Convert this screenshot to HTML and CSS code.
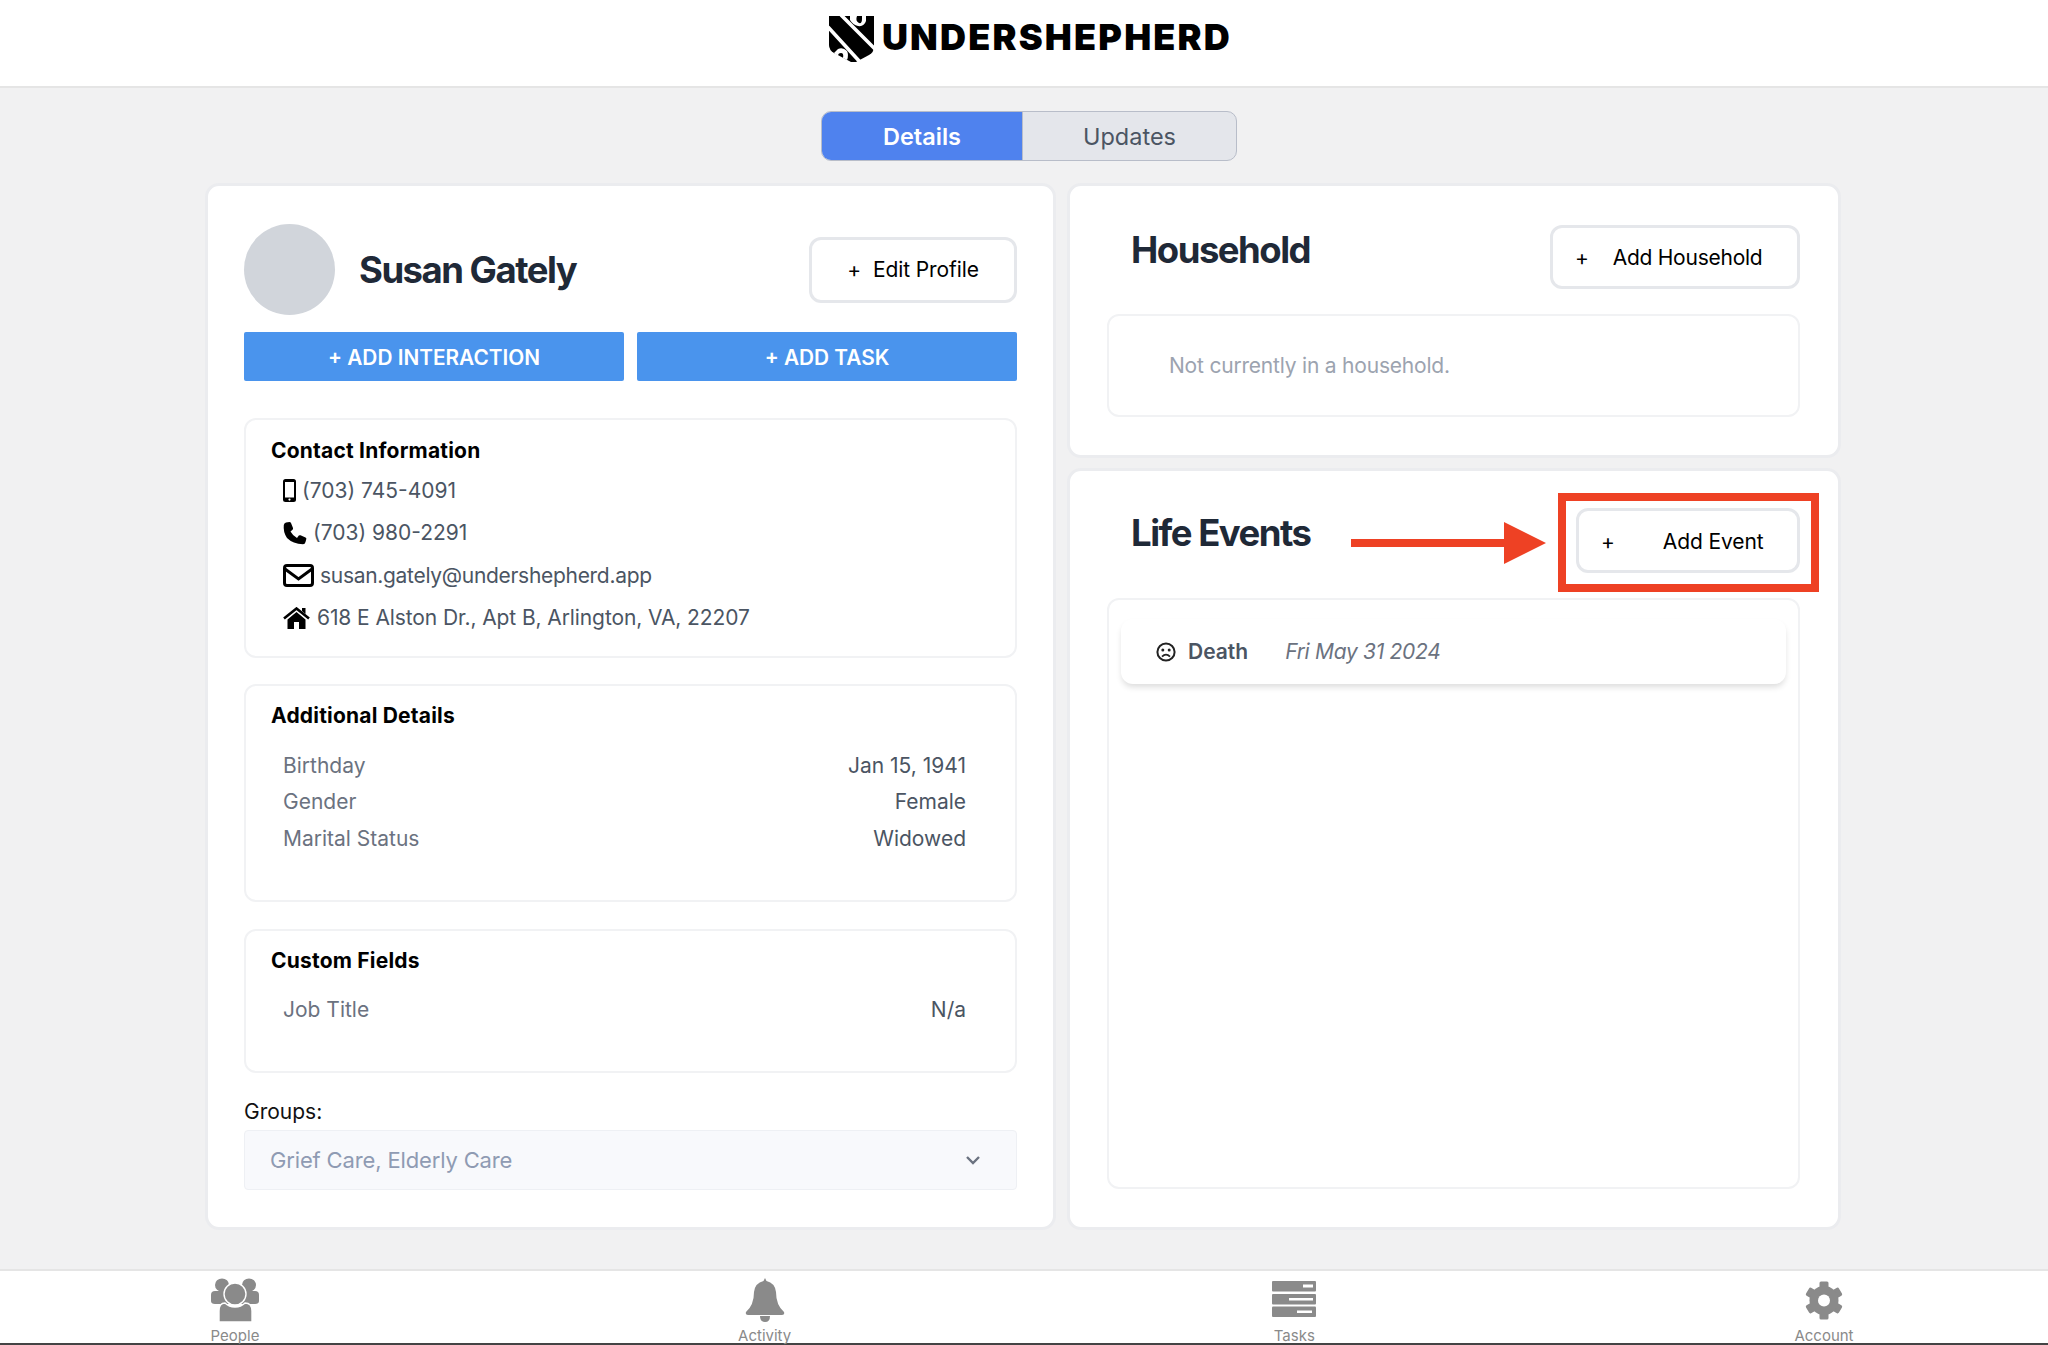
FILE: index.html
```html
<!DOCTYPE html>
<html lang="en">

<head>
  <meta charset="UTF-8" />
  <meta name="viewport" content="width=device-width, initial-scale=1.0" />
  <title>Undershepherd</title>
  <link rel="stylesheet" href="styles.css">
</head>

<body>
  <header class="topbar">
    <div class="logo">
      <svg class="logo-mark" viewBox="0 0 45 46">
        <path d="M0 0H45V31Q45 36 40 39L27 46H22L5 37Q0 34 0 29Z" fill="#000" />
        <path d="M12 -1L46 33M-1 11L31 46" stroke="#fff" stroke-width="3.6" fill="none" />
        <path d="M21 0H28Q26 5 30 7Q33 8 33 3V0H37V5Q35 11 29 10Q24 9 21 4Z" fill="#fff" />
        <path d="M9 33Q14 31 18 35Q20 39 18 44L14 42Q15 37 12 37Q9 37 9 40L5 37Z" fill="#fff" />
      </svg>
      <span class="logo-text">UNDERSHEPHERD</span>
    </div>
  </header>

  <main class="content">
    <div class="tabs">
      <div class="tab tab-active">Details</div>
      <div class="tab">Updates</div>
    </div>

    <div class="columns">
      <section class="card profile">
        <div class="profile-head">
          <div class="avatar"></div>
          <h1 class="name">Susan Gately</h1>
          <button class="btn btn-edit"><span>+</span><span>Edit Profile</span></button>
        </div>

        <div class="actions">
          <button class="action">+ ADD INTERACTION</button>
          <button class="action">+ ADD TASK</button>
        </div>

        <div class="subcard contact">
          <h3 class="subtitle">Contact Information</h3>
          <div class="contact-row">
            <svg class="icon-mobile" viewBox="0 0 13 23">
              <rect x="0" y="0" width="13" height="23" rx="2.5" fill="#000" />
              <rect x="2" y="3" width="9" height="15.5" fill="#fff" />
              <circle cx="6.5" cy="20.6" r="1.1" fill="#fff" />
            </svg>
            <span>(703) 745-4091</span>
          </div>
          <div class="contact-row">
            <svg class="icon-phone" viewBox="0 0 24 24">
              <path d="M3 1.5L6.5 1Q7.5 1 8 2L10 7Q10.3 8 9.5 8.7L7.5 10.5Q10 15 14 17L15.8 14.6Q16.5 14 17.5 14.3L22.5 16.5Q23.7 17 23.3 18L22.5 21Q22 23.3 20 23.3Q10 23 4 17Q0 11 .8 4Q1 2 3 1.5Z" fill="#000" />
            </svg>
            <span>(703) 980-2291</span>
          </div>
          <div class="contact-row email">
            <svg class="icon-mail" viewBox="0 0 31 23">
              <rect x="1.5" y="1.5" width="28" height="20" rx="2.5" fill="none" stroke="#000" stroke-width="3" />
              <path d="M2 5L15.5 15L29 5" fill="none" stroke="#000" stroke-width="3" />
            </svg>
            <span>susan.gately@undershepherd.app</span>
          </div>
          <div class="contact-row address">
            <svg class="icon-home" viewBox="0 0 27 22">
              <path d="M1 11.5L13.5 1.5L26 11.5" fill="none" stroke="#000" stroke-width="2.6" />
              <path d="M19 1H22.5V7L19 4Z" fill="#000" />
              <path d="M4.5 12.5L13.5 5L22.5 12.5V22H16V15H11V22H4.5Z" fill="#000" />
            </svg>
            <span>618 E Alston Dr., Apt B, Arlington, VA, 22207</span>
          </div>
        </div>

        <div class="subcard details">
          <h3 class="subtitle">Additional Details</h3>
          <div class="detail-rows">
            <div class="detail-row"><span>Birthday</span><span class="detail-value">Jan 15, 1941</span></div>
            <div class="detail-row"><span>Gender</span><span class="detail-value">Female</span></div>
            <div class="detail-row"><span>Marital Status</span><span class="detail-value">Widowed</span></div>
          </div>
        </div>

        <div class="subcard custom">
          <h3 class="subtitle">Custom Fields</h3>
          <div class="detail-rows">
            <div class="detail-row"><span>Job Title</span><span class="detail-value">N/a</span></div>
          </div>
        </div>

        <div class="groups-label">Groups:</div>
        <div class="select">
          <span>Grief Care, Elderly Care</span>
          <svg class="chevron" viewBox="0 0 16 10">
            <path d="M2 2L8 8L14 2" fill="none" stroke="#6b7280" stroke-width="2.4" />
          </svg>
        </div>
      </section>

      <div class="side">
        <section class="card household">
          <div class="side-head">
            <h2 class="side-title">Household</h2>
            <button class="btn btn-household"><span>+</span><span>Add Household</span></button>
          </div>
          <div class="subcard empty">Not currently in a household.</div>
        </section>

        <section class="card events">
          <div class="side-head">
            <h2 class="side-title">Life Events</h2>
            <button class="btn btn-event"><span>+</span><span>Add Event</span></button>
            <svg class="callout-arrow" viewBox="0 0 195 42">
              <path d="M0 17H153V0L195 21L153 42V25H0Z" fill="#ee4124" />
            </svg>
            <div class="callout-box"></div>
          </div>
          <div class="subcard event-list">
            <div class="event">
              <svg class="icon-frown" viewBox="0 0 20 20">
                <circle cx="10" cy="10" r="8.6" fill="none" stroke="#222" stroke-width="2" />
                <circle cx="6.8" cy="8" r="1.5" fill="#222" />
                <circle cx="13.2" cy="8" r="1.5" fill="#222" />
                <path d="M6 14.6Q10 10.6 14 14.6" fill="none" stroke="#222" stroke-width="1.8" />
              </svg>
              <span class="event-name">Death</span>
              <span class="event-date">Fri May 31 2024</span>
            </div>
          </div>
        </section>
      </div>
    </div>
  </main>

  <nav class="bottombar">
    <a class="nav-item">
      <svg class="nav-icon" width="48" height="44" viewBox="0 0 48 44">
        <ellipse cx="11" cy="7" rx="7" ry="6.6" />
        <ellipse cx="38" cy="7" rx="7" ry="6.6" />
        <path d="M0 17Q0 13 4 13H44Q48 13 48 17V23Q48 26 44 26H4Q0 26 0 23Z" />
        <ellipse cx="24" cy="16" rx="11" ry="11" stroke="#fff" stroke-width="1.4" />
        <path d="M8 44V33Q8 25 14 25Q18 29 24 29Q30 29 34 25Q41 25 41 33V44Z" stroke="#fff" stroke-width="1.4" />
      </svg>
      <span>People</span>
    </a>
    <a class="nav-item">
      <svg class="nav-icon" width="40" height="44" viewBox="0 0 40 44">
        <path d="M20 0L21.5 3Q30 5 31 14Q31 27 39 34Q40 37 37 37H3Q0 37 1 34Q9 27 9 14Q10 5 18.5 3Z" />
        <path d="M15 38H25Q25 44 20 44Q15 44 15 38Z" />
      </svg>
      <span>Activity</span>
    </a>
    <a class="nav-item">
      <svg class="nav-icon" width="44" height="44" viewBox="0 0 44 44">
        <rect y="3" width="44" height="10.5" rx="1" />
        <rect y="16" width="44" height="10.5" rx="1" />
        <rect y="28.500" width="44" height="10.5" rx="1" />
        <rect x="31" y="6.500" width="10" height="3" fill="#fff" />
        <rect x="17" y="20" width="24" height="2.500" fill="#fff" />
        <rect x="25" y="32.500" width="15" height="2.500" fill="#fff" />
      </svg>
      <span>Tasks</span>
    </a>
    <a class="nav-item">
      <svg class="nav-icon" width="44" height="44" viewBox="0 0 44 44">
        <g transform="translate(22 22.500)">
          <rect x="-4.500" y="-19" width="9" height="38" rx="1.500" />
          <rect x="-4.500" y="-19" width="9" height="38" rx="1.500" transform="rotate(60)" />
          <rect x="-4.500" y="-19" width="9" height="38" rx="1.500" transform="rotate(120)" />
          <circle r="14.500" />
          <circle r="6" fill="#fff" />
        </g>
      </svg>
      <span>Account</span>
    </a>
  </nav>
</body>

</html>
```

FILE: styles.css
```css
* {
  box-sizing: border-box;
}

body {
  margin: 0;
  height: 1345px;
  display: flex;
  flex-direction: column;
  background-color: #f1f1f2;
  font-family: Inter, "Liberation Sans", sans-serif;
  font-size: 21px;
  color: #4b5563;
  overflow: hidden;
}

h1,
h2,
h3 {
  margin: 0;
}

button {
  font-family: inherit;
  cursor: pointer;
}

/* top bar */
.topbar {
  height: 88px;
  flex: none;
  display: flex;
  justify-content: center;
  background-color: #fff;
  border-bottom: 2px solid #e5e5e5;
}

.logo {
  display: flex;
  align-items: flex-start;
  gap: 8px;
  margin-left: 13px;
  padding-top: 16px;
}

.logo-mark {
  width: 45px;
  height: 46px;
}

.logo-text {
  font-size: 36px;
  line-height: 42px;
  font-weight: 900;
  letter-spacing: 2.2px;
  color: #000;
}

/* tabs */
.content {
  flex: 1;
  display: flex;
  flex-direction: column;
  align-items: center;
  padding-top: 23px;
}

.tabs {
  display: flex;
  width: 416px;
  height: 50px;
  margin-left: 10px;
  border: 1px solid #b8bdc9;
  border-radius: 10px;
  overflow: hidden;
  background-color: #e4e6eb;
}

.tab {
  flex: 1;
  display: flex;
  align-items: center;
  justify-content: center;
  font-size: 23.5px;
  color: #4b5563;
}

.tab-active {
  flex: none;
  width: 201px;
  background-color: #4f82ee;
  border-right: 1px solid #b8bdc9;
  color: #fff;
  font-weight: 600;
}

/* cards */
.columns {
  display: flex;
  gap: 11px;
  margin-top: 22px;
  margin-right: 2px;
  width: 1636px;
  height: 1047px;
}

.card {
  background-color: #fff;
  border: 3px solid #ebecef;
  border-radius: 14px;
}

.profile {
  width: 851px;
  flex: none;
  padding: 38px 36px 0;
}

.profile-head {
  display: flex;
  align-items: center;
  height: 91px;
}

.avatar {
  width: 91px;
  height: 91px;
  border-radius: 50%;
  background-color: #d1d5db;
}

.name {
  margin-left: 24px;
  flex: 1;
  font-size: 36.5px;
  font-weight: 700;
  letter-spacing: -1.5px;
  color: #1f2937;
}

.btn {
  display: flex;
  align-items: center;
  height: 66px;
  padding: 0;
  background-color: #fff;
  border: 3px solid #e5e7eb;
  border-radius: 12px;
  font-size: 21px;
  font-weight: 400;
  letter-spacing: -0.1px;
  color: #000;
}

.btn-edit {
  width: 208px;
  gap: 12px;
  justify-content: center;
}

.btn-household {
  width: 250px;
  height: 64px;
  padding-left: 22px;
  gap: 24px;
  letter-spacing: -0.25px;
}

.btn-event {
  width: 224px;
  height: 65px;
  padding: 2px 0 0 22px;
  gap: 48px;
}

.actions {
  display: flex;
  gap: 13px;
  margin-top: 17px;
}

.action {
  flex: 1;
  height: 49px;
  padding-top: 2px;
  background-color: #4a94ed;
  border: none;
  border-radius: 2px;
  font-size: 20.8px;
  font-weight: 600;
  color: #fff;
}

.subcard {
  background-color: #fff;
  border: 2px solid #f1f2f4;
  border-radius: 12px;
}

.profile .subcard {
  padding: 17px 49px 0 25px;
}

.subtitle {
  font-size: 21px;
  line-height: 26px;
  font-weight: 700;
  letter-spacing: 0.2px;
  color: #000;
}

.contact {
  height: 240px;
  margin-top: 37px;
}

.profile .contact {
  padding-top: 18px;
}

.contact .subtitle {
  margin-bottom: 5px;
}

.contact-row {
  display: flex;
  align-items: center;
  gap: 6px;
  height: 42.5px;
  padding-left: 12px;
}

.email {
  letter-spacing: -0.3px;
}

.address {
  gap: 7px;
  letter-spacing: -0.1px;
}

.icon-mobile {
  width: 13px;
  height: 23px;
}

.icon-phone {
  width: 24px;
  height: 24px;
}

.icon-mail {
  width: 31px;
  height: 23px;
}

.icon-home {
  width: 27px;
  height: 22px;
}

.details {
  height: 218px;
  margin-top: 26px;
}

.custom {
  height: 144px;
  margin-top: 27px;
}

.detail-rows {
  margin-top: 18px;
  padding-left: 12px;
}

.custom .detail-rows {
  margin-top: 17px;
}

.detail-row {
  display: flex;
  justify-content: space-between;
  align-items: center;
  height: 36.5px;
  color: #6b7280;
}

.detail-value {
  color: #4b5563;
}

.groups-label {
  margin-top: 26px;
  line-height: 26px;
  color: #111;
}

.select {
  display: flex;
  align-items: center;
  justify-content: space-between;
  height: 60px;
  margin-top: 5px;
  padding: 0 35px 0 25px;
  background-color: #f8f9fc;
  border: 1px solid #eef0f4;
  border-radius: 4px;
  font-size: 22px;
  letter-spacing: -0.15px;
  color: #8f9bb3;
}

.chevron {
  width: 16px;
  height: 10px;
}

/* right side */
.side {
  flex: 1;
  display: flex;
  flex-direction: column;
  gap: 10px;
}

.household {
  height: 275px;
  padding: 39px 38px 0 37px;
}

.events {
  flex: 1;
  padding: 37px 38px 38px 37px;
  display: flex;
  flex-direction: column;
}

.side-head {
  position: relative;
  display: flex;
  align-items: flex-start;
  justify-content: space-between;
}

.side-title {
  margin: 3px 0 0 24px;
  font-size: 36.5px;
  line-height: 44px;
  font-weight: 700;
  letter-spacing: -1.5px;
  color: #1f2937;
}

.empty {
  height: 103px;
  margin-top: 25px;
  display: flex;
  align-items: center;
  padding-left: 60px;
  letter-spacing: -0.2px;
  color: #9ca3af;
}

.event-list {
  flex: 1;
  margin-top: 25px;
  padding: 19px 12px 0;
}

.event {
  display: flex;
  align-items: center;
  height: 65px;
  padding-left: 35px;
  border-radius: 12px;
  box-shadow: 0 4px 6px -1px rgba(0, 0, 0, 0.14);
}

.icon-frown {
  width: 20px;
  height: 20px;
}

.event-name {
  margin-left: 12px;
  font-weight: 600;
  color: #4b5563;
}

.event-date {
  margin-left: 37px;
  font-style: italic;
  letter-spacing: -0.3px;
  color: #6b7280;
}

/* red annotation over the add event button */
.callout-arrow {
  position: absolute;
  left: 244px;
  top: 14px;
  width: 195px;
  height: 42px;
}

.callout-box {
  position: absolute;
  right: -19px;
  top: -15px;
  width: 261px;
  height: 99px;
  border: 8px solid #ee4124;
}

/* bottom nav */
.bottombar {
  height: 76px;
  flex: none;
  display: flex;
  justify-content: space-between;
  padding: 7px 189px 0 200px;
  background-color: #fff;
  border-top: 2px solid #e5e5e5;
  border-bottom: 2px solid #444;
}

.nav-item {
  width: 70px;
  display: flex;
  flex-direction: column;
  align-items: center;
  font-size: 15px;
  line-height: 18px;
  color: #8a8a8a;
}

.nav-icon {
  fill: #8a8a8a;
  flex: none;
  margin-bottom: 5px;
}
```
